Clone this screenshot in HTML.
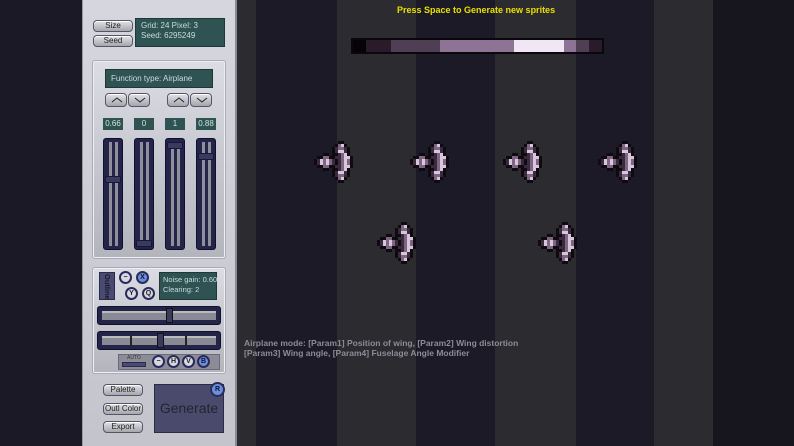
<!DOCTYPE html>
<html><head><meta charset="utf-8"><style>
*{margin:0;padding:0;box-sizing:border-box}
body{width:794px;height:446px;overflow:hidden;background:#1b1925;position:relative;font-family:"Liberation Sans",sans-serif}
.a{position:absolute}
.st{position:absolute;top:0;height:446px}
.L{background:#2c2b30}.D{background:#1c1a26}
.panel{left:82px;top:0;width:155px;height:446px;background:linear-gradient(#d6d6de,#c4c4cc);border-left:1px solid #9a9aa6;border-right:2px solid #8a8a96}
.btn{position:absolute;background:linear-gradient(#e2e2e6,#a6a6ae);border:1px solid #55556a;border-radius:4px;font-size:8px;text-align:center;color:#222;box-shadow:inset 0 1px 0 #fff}
.btn svg{position:absolute;left:5px;top:2px}
.info{position:absolute;background:#2f5252;border:1px solid #1e3838;color:#c8dede;font-size:8px;line-height:10px;padding:2px 5px;white-space:nowrap}
.grp{position:absolute;border:1px solid #aaaabb;border-radius:3px;background:linear-gradient(#dcdce4,#b4b4bc);box-shadow:0 0 0 1px #eeeef6 inset}
.val{position:absolute;width:20px;height:12px;background:#2f5252;color:#d0e4e4;font-size:8px;text-align:center;line-height:12px}
.vs{position:absolute;width:20px;height:112px;background:#232448;border-radius:3px;border:1px solid #0f1030}
.vs i{position:absolute;top:3px;bottom:3px;width:3px;background:#8f8f9c}
.vs b{position:absolute;left:1px;width:16px;height:7px;background:#3a3b5c;border:1px solid #15163a;border-radius:1px}
.rb{position:absolute;width:13px;height:13px;border-radius:50%;background:#d8d8e4;border:2px solid #2a2b58;font-size:7px;font-weight:bold;text-align:center;line-height:9px;color:#222}
.rb.bl{background:#6a8ee0;color:#112}
.hs{position:absolute;background:#232448;border-radius:3px;border:1px solid #0f1030}
</style></head><body>
<div class="st L" style="left:237px;width:19px"></div>
<div class="st D" style="left:256px;width:81px"></div>
<div class="st L" style="left:337px;width:79px"></div>
<div class="st D" style="left:416px;width:79px"></div>
<div class="st L" style="left:495px;width:81px"></div>
<div class="st D" style="left:576px;width:78px"></div>
<div class="st L" style="left:654px;width:59px"></div>
<div class="st" style="left:713px;width:81px;background:#17161f"></div>

<div class="a" style="left:397px;top:5px;font-size:9px;font-weight:bold;color:#e8e000">Press Space to Generate new sprites</div>
<div class="a" style="left:351px;top:38px;width:253px;height:16px;background:#0a080c;padding:2px;display:flex">
<div style="width:13px;background:#050306"></div><div style="width:25px;background:#2a1b2a"></div><div style="width:49px;background:#4f3f55"></div><div style="width:74px;background:#8e7494"></div><div style="width:50px;background:#f0e6f4"></div><div style="width:12px;background:#8e7494"></div><div style="width:13px;background:#4f3f55"></div><div style="width:13px;background:#2a1b2a"></div></div>

<div class="a" style="left:244px;top:338px;font-size:8.5px;line-height:10px;color:#8c8c96;font-weight:bold">Airplane mode: [Param1] Position of wing, [Param2] Wing distortion<br>[Param3] Wing angle, [Param4] Fuselage Angle Modifier</div>

<svg class="a" style="left:0;top:0" width="794" height="446" id="sv"></svg>

<div class="a panel"></div>
<div class="btn" style="left:93px;top:20px;width:40px;height:12px;line-height:10px">Size</div>
<div class="btn" style="left:93px;top:35px;width:40px;height:12px;line-height:10px">Seed</div>
<div class="info" style="left:135px;top:18px;width:90px;height:29px">Grid: 24 Pixel: 3<br>Seed: 6295249</div>

<div class="grp" style="left:92px;top:60px;width:134px;height:199px"></div>
<div class="info" style="left:105px;top:69px;width:108px;height:19px;line-height:14px">Function type: Airplane</div>
<div class="btn" style="left:105px;top:93px;width:22px;height:14px"><svg width="12" height="8"><path d="M1 6 L6 2 L11 6" stroke="#222" fill="none"/></svg></div>
<div class="btn" style="left:128px;top:93px;width:22px;height:14px"><svg width="12" height="8"><path d="M1 2 L6 6 L11 2" stroke="#222" fill="none"/></svg></div>
<div class="btn" style="left:167px;top:93px;width:22px;height:14px"><svg width="12" height="8"><path d="M1 6 L6 2 L11 6" stroke="#222" fill="none"/></svg></div>
<div class="btn" style="left:190px;top:93px;width:22px;height:14px"><svg width="12" height="8"><path d="M1 2 L6 6 L11 2" stroke="#222" fill="none"/></svg></div>
<div class="val" style="left:103px;top:118px">0.66</div>
<div class="val" style="left:134px;top:118px">0</div>
<div class="val" style="left:165px;top:118px">1</div>
<div class="val" style="left:196px;top:118px">0.88</div>
<div class="vs" style="left:103px;top:138px"><i style="left:5px"></i><i style="left:11px"></i><b style="top:37px"></b></div>
<div class="vs" style="left:134px;top:138px"><i style="left:5px"></i><i style="left:11px"></i><b style="top:101px"></b></div>
<div class="vs" style="left:165px;top:138px"><i style="left:5px"></i><i style="left:11px"></i><b style="top:3px"></b></div>
<div class="vs" style="left:196px;top:138px"><i style="left:5px"></i><i style="left:11px"></i><b style="top:14px"></b></div>

<div class="grp" style="left:92px;top:267px;width:134px;height:107px"></div>
<div class="a" style="left:99px;top:272px;width:16px;height:28px;background:#4a4b72;border:1px solid #2a2b4a;overflow:hidden"><div style="position:absolute;left:12px;top:1px;transform:rotate(90deg);transform-origin:0 0;font-size:7.5px;color:#1a1a2a;font-weight:bold;white-space:nowrap">Outline</div></div>
<div class="rb" style="left:119px;top:271px">−</div>
<div class="rb bl" style="left:136px;top:271px">X</div>
<div class="rb" style="left:125px;top:287px">Y</div>
<div class="rb" style="left:142px;top:287px">Q</div>
<div class="info" style="left:159px;top:272px;width:58px;height:28px;padding:2px 3px;font-size:7.5px">Noise gain: 0.60<br>Clearing: 2</div>
<div class="hs" style="left:97px;top:306px;width:124px;height:19px"><div class="a" style="left:4px;right:4px;top:4px;height:9px;background:#8a8a96;border-top:2px solid #bbb"></div><div class="a" style="left:68px;top:1px;width:7px;height:15px;background:#3a3b5c;border:1px solid #111"></div></div>
<div class="hs" style="left:97px;top:331px;width:124px;height:19px"><div class="a" style="left:4px;right:4px;top:4px;height:9px;background:#8a8a96;border-top:2px solid #bbb"></div><div class="a" style="left:59px;top:1px;width:7px;height:15px;background:#3a3b5c;border:1px solid #111"></div><div class="a" style="left:32px;top:3px;width:2px;height:11px;background:#222"></div><div class="a" style="left:87px;top:3px;width:2px;height:11px;background:#222"></div></div>
<div class="a" style="left:118px;top:354px;width:102px;height:16px;background:#8c8c98;border:1px solid #6a6a7a"></div>
<div class="a" style="left:127px;top:355px;font-size:5px;color:#333">AUTO</div>
<div class="a" style="left:122px;top:362px;width:24px;height:5px;background:#4a4b72;border:1px solid #2a2b4a"></div>
<div class="rb" style="left:152px;top:355px">−</div>
<div class="rb" style="left:167px;top:355px">H</div>
<div class="rb" style="left:182px;top:355px">V</div>
<div class="rb bl" style="left:197px;top:355px">B</div>

<div class="btn" style="left:103px;top:384px;width:40px;height:12px;line-height:10px">Palette</div>
<div class="btn" style="left:103px;top:403px;width:40px;height:12px;line-height:10px">Outl Color</div>
<div class="btn" style="left:103px;top:421px;width:40px;height:12px;line-height:10px">Export</div>
<div class="a" style="left:154px;top:384px;width:70px;height:49px;background:#4a4b6c;border:1px solid #2a2b44;color:#232332;font-size:14px;text-align:center;line-height:46px">Generate</div>
<div class="rb bl" style="left:210px;top:382px;width:15px;height:15px;line-height:11px">R</div>

<script>
var m=["........kk....",".......kmlk...","......kdmmdk..","......kdlldk..","...kk.kkdmlk..",".kkmmkkddmllk.","kdlmlmdkdmlmk.","kdlmlmdkdmlmk.",".kkmmkkddmllk.","...kk.kkdmlk..","......kdlldk..","......kdmmdk..",".......kmlk...","........kk...."];
var c={k:"#0e0a10",d:"#3a2a3e",m:"#7e6682",l:"#d8c6dc"};
var pos=[[314,141],[410,141],[503,141],[598,141],[377,222],[538,222]];
var s="";
pos.forEach(function(p){m.forEach(function(r,y){for(var x=0;x<r.length;x++){var ch=r[x];if(ch!="."){s+='<rect x="'+(p[0]+x*3)+'" y="'+(p[1]+y*3)+'" width="3" height="3" fill="'+c[ch]+'"/>';}}});});
document.getElementById("sv").innerHTML=s;
</script>
</body></html>
